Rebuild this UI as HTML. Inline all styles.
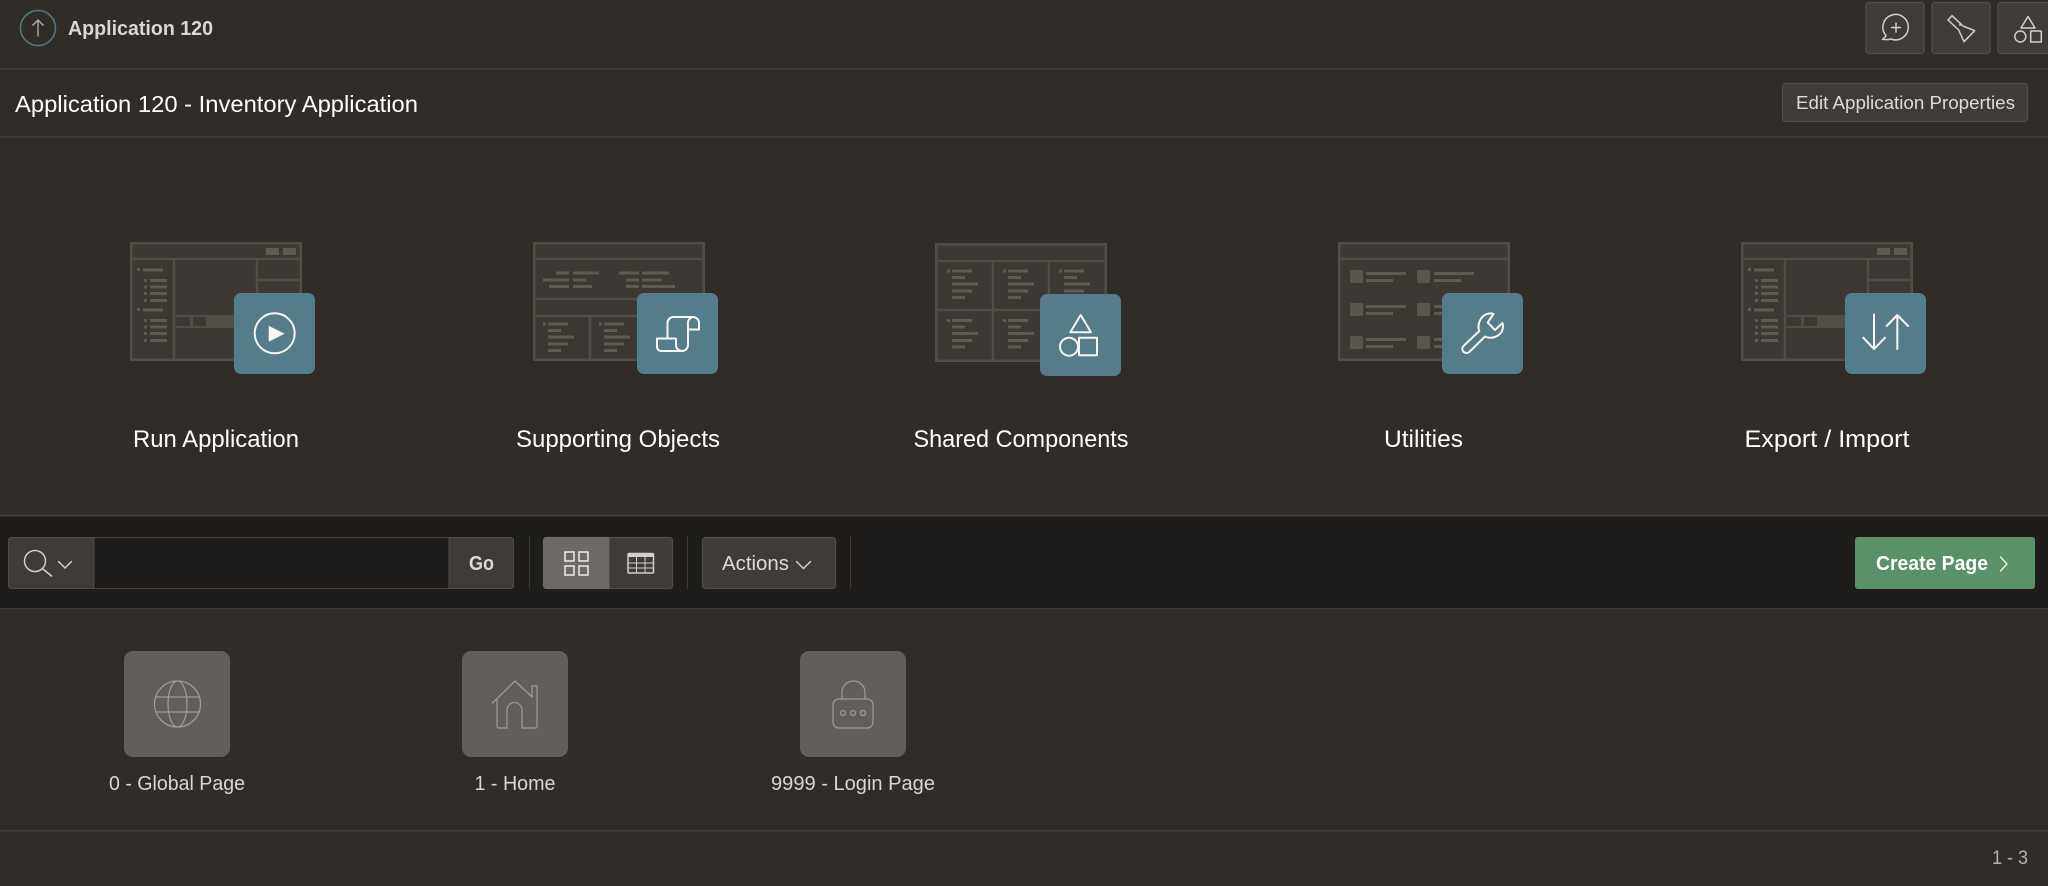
<!DOCTYPE html>
<html><head><meta charset="utf-8"><title>Application 120</title>
<style>
html,body{margin:0;padding:0;background:#302d29;width:2048px;height:886px;overflow:hidden}
svg{display:block}
text{font-family:"Liberation Sans",sans-serif;fill:#fff}
.b{font-weight:700}
.f{fill:#3c3934;stroke:#514e48;stroke-width:2.500}
.l{stroke:#514e48;stroke-width:2.500;fill:none}
.w{fill:none;stroke:#f7f6f3;stroke-width:2;stroke-linecap:round;stroke-linejoin:round}
.i{fill:none;stroke:#d2d0cb;stroke-width:1.500;stroke-linecap:round;stroke-linejoin:round}
.t{fill:none;stroke:#9d9a95;stroke-width:1.300;stroke-linecap:round;stroke-linejoin:round}
.btn{fill:#3f3c37;stroke:#514e48;stroke-width:1.200}
</style></head><body>
<svg width="2048" height="886" viewBox="0 0 2048 886" xmlns="http://www.w3.org/2000/svg">
<defs>
<g id="dash">
<rect class="f" x="1.250" y="1.250" width="169.500" height="116.500"/>
<path class="l" d="M0 17H172M44 17V119M127 17V73M127 38H172"/>
<rect fill="#5e5b55" x="136" y="6" width="13" height="7"/><rect fill="#5e5b55" x="153" y="6" width="13" height="7"/>
<rect x="46" y="73" width="126" height="13" fill="#514e48"/>
<rect x="46" y="75" width="14" height="9" fill="#3c3934"/><rect x="63" y="75" width="13" height="9" fill="#3c3934"/>
<path fill="#5e5b55" d="M7 26h3v3H7zM13 26.500h20v3H13zM14 37h3v3h-3zM20 37h17v3H20zM14 43.500h3v3h-3zM20 43.500h17v3H20zM14 50h3v3h-3zM20 50h17v3H20zM14 57h3v3h-3zM20 57h17v3H20zM7 66h3v3H7zM13 66.500h20v3H13zM14 77h3v3h-3zM20 77h17v3H20zM14 83.500h3v3h-3zM20 83.500h17v3H20zM14 90h3v3h-3zM20 90h17v3H20zM14 97h3v3h-3zM20 97h17v3H20z"/>
</g>
<path id="list" fill="#5e5b55" d="M0 0h3v3H0zM5 0h20v3H5zM5 6.500h13v3H5zM5 13h26v3H5zM5 20h20v3H5zM5 26.500h13v3H5z"/>
<g id="rowu"><rect x="12" y="0" width="13" height="13" rx="1.500" fill="#595650"/><rect x="28" y="2" width="40" height="3" fill="#5e5b55"/><rect x="28" y="9" width="27" height="3" fill="#5e5b55"/>
<rect x="79" y="0" width="13" height="13" rx="1.500" fill="#595650"/><rect x="96" y="2" width="40" height="3" fill="#5e5b55"/><rect x="96" y="9" width="27" height="3" fill="#5e5b55"/></g>
</defs>

<rect width="2048" height="886" fill="#302d29"/>
<rect y="68" width="2048" height="1.500" fill="#413e39"/>
<rect y="136" width="2048" height="1.500" fill="#413e39"/>

<!-- top bar -->
<circle cx="38" cy="28" r="17.500" fill="none" stroke="#4f7b89" stroke-width="1.500"/>
<path d="M38 36.500V20M32.500 25.500L38 20l5.500 5.500" fill="none" stroke="#b5b2ad" stroke-width="1.300"/>
<text class="b" x="68" y="35" font-size="20" style="fill:#d9d7d3" textLength="145" lengthAdjust="spacingAndGlyphs">Application 120</text>
<text x="15" y="112" font-size="23" textLength="403" lengthAdjust="spacingAndGlyphs">Application 120 - Inventory Application</text>

<rect class="btn" x="1866" y="2.500" width="58" height="51" rx="3"/>
<rect class="btn" x="1932" y="2.500" width="58" height="51" rx="3"/>
<rect class="btn" x="1998" y="2.500" width="60" height="51" rx="3"/>
<path class="i" d="M1886 35.500A12.700 12.700 0 1 1 1891 39C1888.500 39.700 1885.500 39.800 1882.500 39.300C1884.500 38 1885.700 37 1886 35.500Z"/>
<path class="i" d="M1896 23V32M1891.500 27.500H1900.500"/>
<path class="i" d="M1948 20L1952 15.700L1963 26L1974.700 30.700L1964 41.700L1958.700 30Z"/>
<circle cx="1960" cy="25" r="1" fill="#d2d0cb"/>
<path class="i" d="M2028 16.500L2035 28H2021Z"/><circle class="i" cx="2020.300" cy="36.500" r="5.500"/><rect class="i" x="2030.700" y="31" width="10.600" height="11"/>

<rect class="btn" x="1782.500" y="83.500" width="245" height="38" rx="3"/>
<text x="1796" y="109" font-size="18" style="fill:#dddbd7" textLength="219" lengthAdjust="spacingAndGlyphs">Edit Application Properties</text>

<!-- Run -->
<use href="#dash" x="130" y="242"/>
<rect x="234" y="293" width="81" height="81" rx="7" fill="#557c8a"/>
<circle class="w" cx="274.700" cy="333.300" r="20"/>
<path d="M268.700 325.700L284.700 333.700L268.700 341.700Z" fill="#f7f6f3"/>
<text x="216" y="447" font-size="24" text-anchor="middle" textLength="166" lengthAdjust="spacingAndGlyphs">Run Application</text>

<!-- Supporting -->
<g transform="translate(533 242)">
<rect class="f" x="1.250" y="1.250" width="169.500" height="116.500"/>
<path class="l" d="M0 17H172M0 57H172M0 74H172M57 74V119M113 74V119"/>
<path fill="#5e5b55" d="M23 29.500h13v3H23zM40 29.500h26v3H40zM86 29.500h20v3H86zM109 29.500h27v3h-27zM10 36.500h26v3H10zM40 36.500h13v3H40zM93 36.500h13v3H93zM109 36.500h20v3h-20zM16 43h20v3H16zM40 43h19v3H40zM93 43h13v3H93zM109 43h33v3h-33z"/>
<use href="#list" x="10" y="80.500"/><use href="#list" x="66" y="80.500"/>
</g>
<rect x="637" y="293" width="81" height="81" rx="7" fill="#557c8a"/>
<g transform="translate(637 293)"><path class="w" d="M30.500 45.500V30a6 6 0 0 1 6-6H56a6 6 0 0 1 6 6V36.500H51V30a6 6 0 0 1 5-6M51 30V52a6 6 0 0 1-6 6H24a4 4 0 0 1-4-4V45.500H39V52a6 6 0 0 0 6 6"/></g>
<text x="618" y="447" font-size="24" text-anchor="middle" textLength="204" lengthAdjust="spacingAndGlyphs">Supporting Objects</text>

<!-- Shared -->
<g transform="translate(935 243)">
<rect class="f" x="1.250" y="1.250" width="169.500" height="116.500"/>
<path class="l" d="M0 18H172M0 67H172M58 18V119M114 18V119"/>
<use href="#list" x="12" y="26.500"/><use href="#list" x="68" y="26.500"/><use href="#list" x="124" y="26.500"/>
<use href="#list" x="12" y="76"/><use href="#list" x="68" y="76"/>
</g>
<rect x="1040" y="294" width="81" height="82" rx="7" fill="#557c8a"/>
<g transform="translate(1040 294)"><path class="w" d="M40.700 21L51 38.300H30.300Z"/><circle class="w" cx="29" cy="52.700" r="9"/><rect class="w" x="39" y="43.700" width="18" height="17.600"/></g>
<text x="1021" y="447" font-size="24" text-anchor="middle" textLength="215" lengthAdjust="spacingAndGlyphs">Shared Components</text>

<!-- Utilities -->
<g transform="translate(1338 242)">
<rect class="f" x="1.250" y="1.250" width="169.500" height="116.500"/>
<path class="l" d="M0 17H172"/>
<use href="#rowu" y="28"/><use href="#rowu" y="61"/><use href="#rowu" y="94"/>
</g>
<rect x="1442" y="293" width="81" height="81" rx="7" fill="#557c8a"/>
<g transform="translate(1442 293)"><path class="w" d="M21.500 53L37.300 38C35 32 38 22 47 20.500C48.500 20.300 50 20.500 51.500 21L45.700 29.500L53 37L60.500 30C62 35 60 40 56 42.500C52 45 47 45.500 43 43.500L27.500 58.800A3.800 3.800 0 0 1 21.500 53Z"/></g>
<text x="1423.500" y="447" font-size="24" text-anchor="middle" textLength="79" lengthAdjust="spacingAndGlyphs">Utilities</text>

<!-- Export -->
<use href="#dash" x="1741" y="242"/>
<rect x="1845" y="293" width="81" height="81" rx="7" fill="#557c8a"/>
<g transform="translate(1845 293)"><path class="w" d="M29 21.500V56M18.300 44.700L29 56L40 44.700M52.300 22V56M41.700 33L52.300 22L63 33"/></g>
<text x="1827" y="447" font-size="24" text-anchor="middle" textLength="165" lengthAdjust="spacingAndGlyphs">Export / Import</text>

<!-- toolbar -->
<rect y="516" width="2048" height="92" fill="#1e1d1b"/>
<rect y="515" width="2048" height="1.500" fill="#45423d"/>
<rect y="608" width="2048" height="1" fill="#3d3a35"/>
<rect x="8.500" y="537.500" width="505" height="51" rx="3" fill="#1e1d1b" stroke="#45423d" stroke-width="1"/>
<path d="M11.500 537.500H94V588.500H11.500A3 3 0 0 1 8.500 585.500V540.500A3 3 0 0 1 11.500 537.500Z" fill="#3f3c37" stroke="#514e48" stroke-width="1"/>
<path d="M449 537.500H510.500A3 3 0 0 1 513.500 540.500V585.500A3 3 0 0 1 510.500 588.500H449Z" fill="#3f3c37" stroke="#514e48" stroke-width="1"/>
<circle class="i" cx="35" cy="561" r="10.500"/><path class="i" d="M43 569L51.500 576"/>
<path class="i" d="M58.500 561.500L65 568L71.500 561.500"/>
<text class="b" x="469" y="570" font-size="20" style="fill:#dddbd7" textLength="25" lengthAdjust="spacingAndGlyphs">Go</text>

<rect x="529" y="536" width="1" height="53" fill="#3f3c37"/>
<rect x="687" y="536" width="1" height="53" fill="#3f3c37"/>
<rect x="850" y="536" width="1" height="53" fill="#3f3c37"/>

<rect class="btn" x="543.500" y="537.500" width="129" height="51" rx="3"/>
<path d="M546.500 537.500H609V588.500H546.500A3 3 0 0 1 543.500 585.500V540.500A3 3 0 0 1 546.500 537.500Z" fill="#6d6a65" stroke="#6d6a65" stroke-width="1"/>
<g fill="none" stroke="#eeedea" stroke-width="1.500"><rect x="565" y="552" width="9" height="9"/><rect x="579" y="552" width="9" height="9"/><rect x="565" y="566" width="9" height="9"/><rect x="579" y="566" width="9" height="9"/></g>
<rect class="i" x="628" y="553.500" width="25.500" height="19.500" rx="1"/>
<path d="M628 553.500H653.500V557H628Z" fill="#d2d0cb"/>
<path d="M628 563H653.500M628 568H653.500M636.500 557V573M645 557V573" stroke="#d2d0cb" stroke-width="1" fill="none"/>

<rect class="btn" x="702.500" y="537.500" width="133" height="51" rx="3"/>
<text x="722" y="570" font-size="20" style="fill:#dddbd7" textLength="67" lengthAdjust="spacingAndGlyphs">Actions</text>
<path class="i" d="M796.500 561.500L803.500 568.500L810.500 561.500"/>

<rect x="1855" y="537" width="180" height="52" rx="3" fill="#5a9169"/>
<text class="b" x="1876" y="570" font-size="20" textLength="112" lengthAdjust="spacingAndGlyphs">Create Page</text>
<path d="M2000.500 557L2007 564L2000.500 571" fill="none" stroke="#f7f6f3" stroke-width="1.300" stroke-linecap="round" stroke-linejoin="round"/>

<!-- tiles -->
<rect x="124" y="651" width="106" height="106" rx="9" fill="#625e59"/>
<rect x="462" y="651" width="106" height="106" rx="9" fill="#625e59"/>
<rect x="800" y="651" width="106" height="106" rx="9" fill="#625e59"/>

<circle class="t" cx="177.500" cy="704" r="23"/>
<ellipse class="t" cx="177.500" cy="704" rx="9.500" ry="23"/>
<path class="t" d="M156.500 697H198.500M156.500 712H198.500"/>

<path class="t" d="M492.500 703L515 681L532 697M497 699V726A2 2 0 0 0 499 728H507V710A7.500 7.500 0 0 1 522 710V728H535A2 2 0 0 0 537 726V686H532V697"/>

<rect class="t" x="833" y="699" width="40" height="29" rx="6"/>
<path class="t" d="M842 699V692.500A11.500 11.500 0 0 1 865 692.500V699"/>
<circle class="t" cx="843" cy="713" r="2.500"/><circle class="t" cx="853" cy="713" r="2.500"/><circle class="t" cx="863" cy="713" r="2.500"/>

<text x="177" y="790" font-size="20" text-anchor="middle" style="fill:#d9d7d3" textLength="136" lengthAdjust="spacingAndGlyphs">0 - Global Page</text>
<text x="515" y="790" font-size="20" text-anchor="middle" style="fill:#d9d7d3" textLength="81" lengthAdjust="spacingAndGlyphs">1 - Home</text>
<text x="853" y="790" font-size="20" text-anchor="middle" style="fill:#d9d7d3" textLength="164" lengthAdjust="spacingAndGlyphs">9999 - Login Page</text>

<rect y="830" width="2048" height="1.500" fill="#413e39"/>
<text x="1992" y="864" font-size="19" style="fill:#b5b2ad" textLength="36" lengthAdjust="spacingAndGlyphs">1 - 3</text>
</svg>
</body></html>
